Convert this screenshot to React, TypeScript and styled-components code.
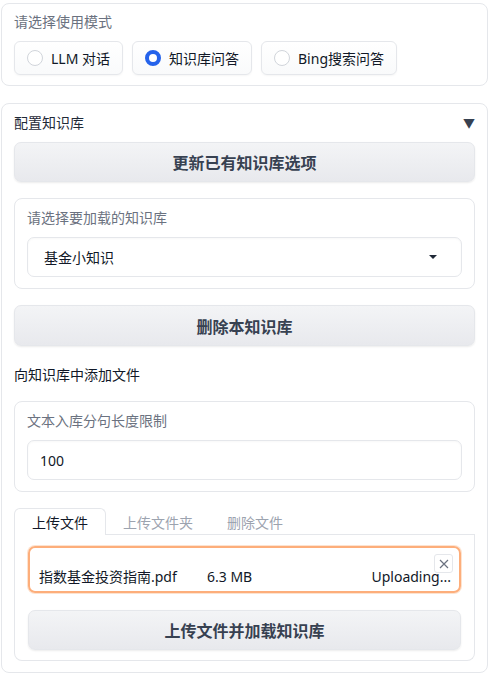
import React from "react";
import styled, { createGlobalStyle } from "styled-components";

const Global = createGlobalStyle`
  html, body { margin: 0; padding: 0; background: #fff; }
  body {
    font-family: "Noto Sans", "Noto Sans CJK SC", sans-serif;
    color: #1f2937;
    -webkit-font-smoothing: antialiased;
  }
  * { box-sizing: border-box; }
`;

const Page = styled.div`
  width: 488px;
  padding: 3px 0 0 1px;
  display: flex;
  flex-direction: column;
  gap: 17px;
`;

const Card = styled.div<{ $pad: string }>`
  border: 1px solid #e5e7eb;
  border-radius: 8px;
  background: #fff;
  display: flex;
  flex-direction: column;
  padding: ${(p) => p.$pad};
`;

const Label = styled.div<{ $dark?: boolean }>`
  font-size: 14px;
  line-height: 20px;
  color: ${(p) => (p.$dark ? "#1f2937" : "#6b7280")};
`;

const RadioRow = styled.div`
  display: flex;
  gap: 9px;
  margin-top: 9px;
`;

const Pill = styled.label`
  height: 34px;
  display: flex;
  align-items: center;
  gap: 8px;
  padding: 0 12px;
  border: 1px solid #e5e7eb;
  border-radius: 6px;
  background: linear-gradient(#fff, #f9fafb);
  box-shadow: 0 1px 2px rgba(0, 0, 0, 0.04);
  font-size: 14px;
  color: #111827;
`;

const Dot = styled.span<{ $on?: boolean }>`
  width: 16px;
  height: 16px;
  border-radius: 50%;
  flex: none;
  border: ${(p) => (p.$on ? "4px solid #2563eb" : "1px solid #d1d5db")};
  background: #fff;
`;

const Header = styled.div`
  display: flex;
  justify-content: space-between;
  align-items: center;
`;

const Arrow = styled.span`
  font-size: 12px;
  color: #374151;
`;

const Stack = styled.div`
  display: flex;
  flex-direction: column;
  gap: 16px;
  margin-top: 9px;
`;

const Button = styled.button<{ $h?: number }>`
  height: ${(p) => p.$h ?? 40}px;
  width: 100%;
  border: 1px solid #e5e7eb;
  border-radius: 7px;
  background: linear-gradient(#f3f4f6, #e8e9ed);
  box-shadow: 0 1px 2px rgba(0, 0, 0, 0.08);
  font-family: inherit;
  font-size: 16px;
  font-weight: 700;
  color: #374151;
`;

const Block = styled.div`
  border: 1px solid #e5e7eb;
  border-radius: 8px;
  padding: 9px 12px 11px 12px;
  display: flex;
  flex-direction: column;
  gap: 9px;
`;

const Field = styled.div<{ $padLeft?: number }>`
  height: 40px;
  border: 1px solid #e5e7eb;
  border-radius: 7px;
  display: flex;
  align-items: center;
  justify-content: space-between;
  padding: 0 24px 0 ${(p) => p.$padLeft ?? 16}px;
  font-size: 14px;
  color: #111827;
  box-shadow: inset 0 1px 2px rgba(0, 0, 0, 0.03);
`;

const Caret = styled.span`
  width: 0;
  height: 0;
  border-left: 4px solid transparent;
  border-right: 4px solid transparent;
  border-top: 4px solid #1f2937;
`;

const SectionTitle = styled.div`
  font-size: 14px;
  line-height: 21px;
  color: #111827;
  margin-top: 2px;
`;

const Tabs = styled.div`
  display: flex;
  flex-direction: column;
`;

const TabBar = styled.div`
  display: flex;
  height: 27px;
`;

const Tab = styled.div<{ $active?: boolean }>`
  padding: 0 17px;
  font-size: 14px;
  line-height: 27px;
  color: ${(p) => (p.$active ? "#111827" : "#9ca3af")};
  border: 1px solid ${(p) => (p.$active ? "#e5e7eb" : "transparent")};
  border-bottom: ${(p) => (p.$active ? "none" : "1px solid #e5e7eb")};
  border-left-width: ${(p) => (p.$active ? "1px" : "0")};
  border-right-width: ${(p) => (p.$active ? "1px" : "0")};
  border-radius: 6px 6px 0 0;
`;

const TabFill = styled.div`
  flex: 1;
  border-bottom: 1px solid #e5e7eb;
`;

const TabBody = styled.div`
  border: 1px solid #e5e7eb;
  border-top: none;
  border-radius: 0 0 8px 8px;
  padding: 11px 13px 10px 13px;
  display: flex;
  flex-direction: column;
  gap: 17px;
`;

const FileBox = styled.div`
  position: relative;
  height: 47px;
  border: 2px solid #fdae7b;
  border-radius: 7px;
  display: flex;
  align-items: flex-end;
  padding: 0 8px 4px 9px;
  font-size: 14px;
  color: #111827;
  line-height: 20px;
  box-shadow: 0 0 0 1px #fde3d0;
`;

const FileName = styled.span`
  width: 168px;
`;

const FileSize = styled.span`
  flex: 1;
`;

const Close = styled.span`
  position: absolute;
  top: 6px;
  right: 6px;
  width: 19px;
  height: 19px;
  border: 1px solid #e5e7eb;
  border-radius: 3px;
  background: #fff;
  display: flex;
  align-items: center;
  justify-content: center;
`;

export default function App() {
  return (
    <>
      <Global />
      <Page>
        <Card $pad="8px 12px 10px 12px">
          <Label>请选择使用模式</Label>
          <RadioRow>
            <Pill>
              <Dot />
              LLM 对话
            </Pill>
            <Pill>
              <Dot $on />
              知识库问答
            </Pill>
            <Pill>
              <Dot />
              Bing搜索问答
            </Pill>
          </RadioRow>
        </Card>
        <Card $pad="9px 12px 11px 12px">
          <Header>
            <Label $dark>配置知识库</Label>
            <Arrow>▼</Arrow>
          </Header>
          <Stack>
            <Button>更新已有知识库选项</Button>
            <Block>
              <Label>请选择要加载的知识库</Label>
              <Field>
                基金小知识
                <Caret />
              </Field>
            </Block>
            <Button $h={41}>删除本知识库</Button>
            <SectionTitle>向知识库中添加文件</SectionTitle>
            <Block>
              <Label>文本入库分句长度限制</Label>
              <Field $padLeft={12}>100</Field>
            </Block>
            <Tabs>
              <TabBar>
                <Tab $active>上传文件</Tab>
                <Tab>上传文件夹</Tab>
                <Tab>删除文件</Tab>
                <TabFill />
              </TabBar>
              <TabBody>
                <FileBox>
                  <FileName>指数基金投资指南.pdf</FileName>
                  <FileSize>6.3 MB</FileSize>
                  <span>Uploading...</span>
                  <Close>
                    <svg width="10" height="10" viewBox="0 0 10 10">
                      <path d="M1 1L9 9M9 1L1 9" stroke="#6b7280" strokeWidth="1.2" />
                    </svg>
                  </Close>
                </FileBox>
                <Button>上传文件并加载知识库</Button>
              </TabBody>
            </Tabs>
          </Stack>
        </Card>
      </Page>
    </>
  );
}
